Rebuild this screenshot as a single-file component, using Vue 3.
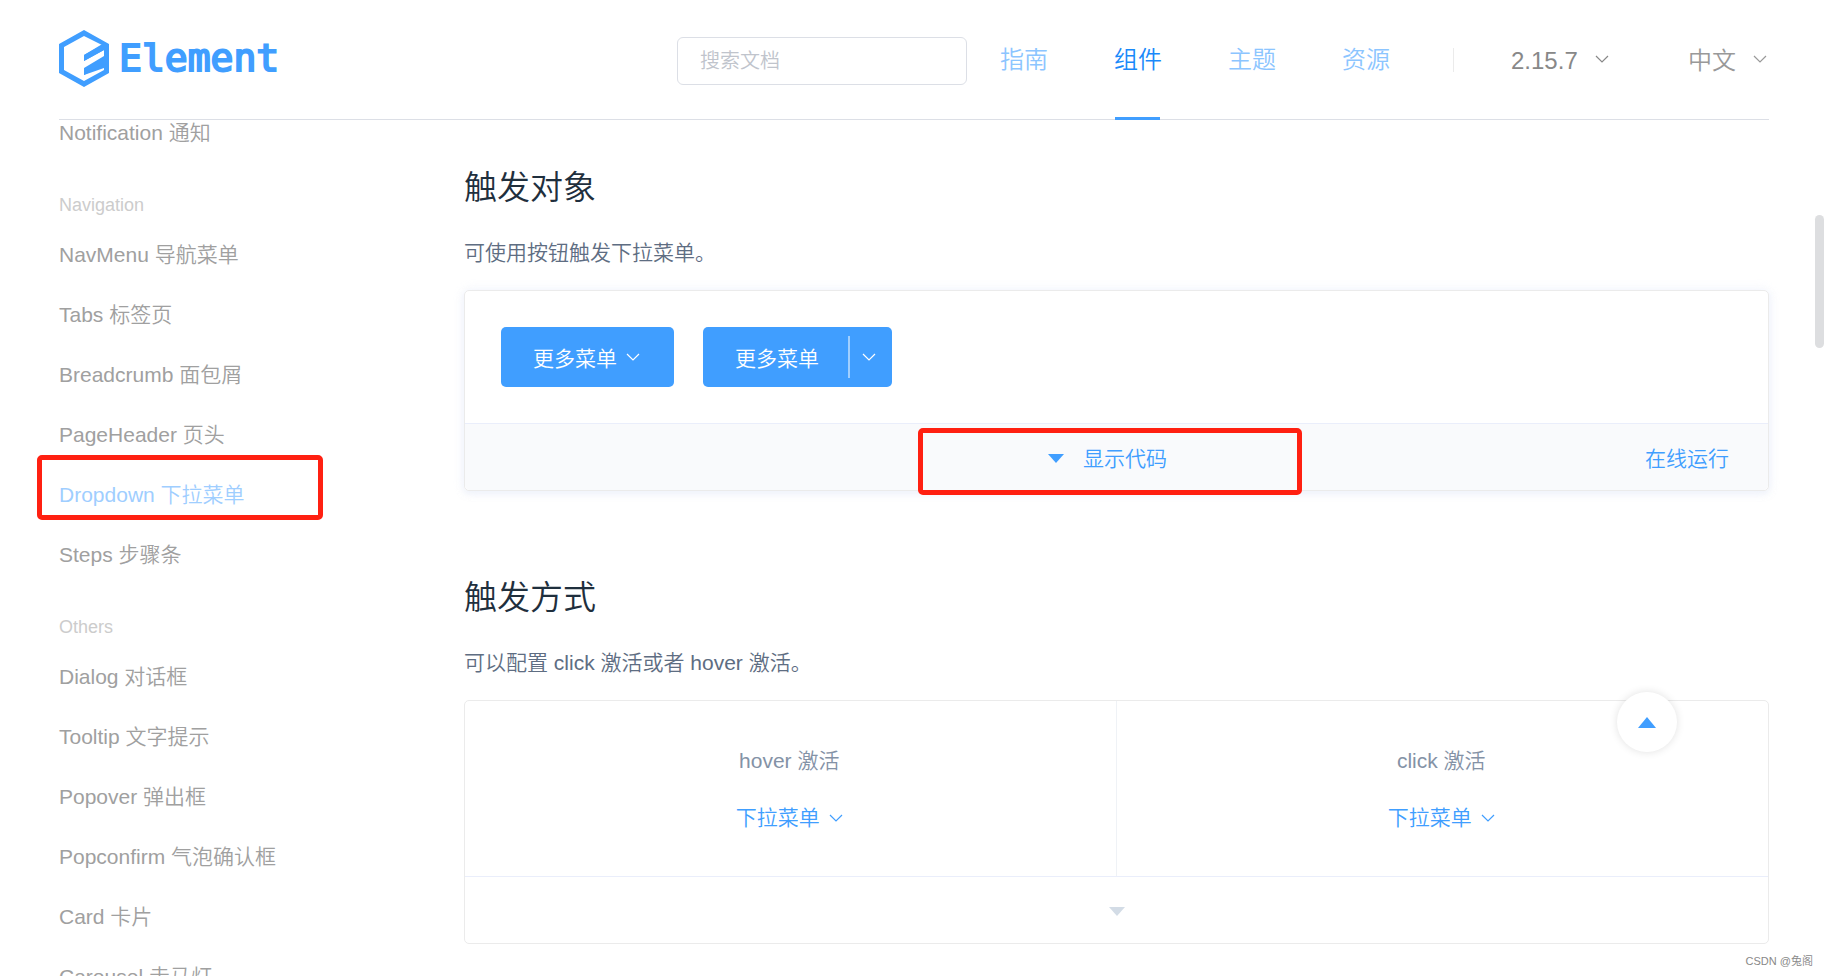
<script setup>
import { ref } from 'vue'

const keyword = ref('')
const navLinks = [
  { text: '指南' },
  { text: '组件', active: true },
  { text: '主题' },
  { text: '资源' }
]

const groups = [
  { title: '', items: ['Notification 通知'] },
  {
    title: 'Navigation',
    items: [
      'NavMenu 导航菜单',
      'Tabs 标签页',
      'Breadcrumb 面包屑',
      'PageHeader 页头',
      'Dropdown 下拉菜单',
      'Steps 步骤条'
    ]
  },
  {
    title: 'Others',
    items: [
      'Dialog 对话框',
      'Tooltip 文字提示',
      'Popover 弹出框',
      'Popconfirm 气泡确认框',
      'Card 卡片',
      'Carousel 走马灯'
    ]
  }
]
const current = 'Dropdown 下拉菜单'
const triggers = ['hover 激活', 'click 激活']
</script>

<template>
  <div class="page">
    <header class="header">
      <div class="header-inner">
        <a class="logo" href="#" aria-label="Element">
          <svg class="logo-mark" viewBox="0 0 50 57" aria-hidden="true">
            <path fill-rule="evenodd" d="M25 0 50 14V43L25 57 0 43V14ZM25 6 5 17V40L25 51 45 40V38L25 45V39L45 27V20L25 31V25L43 15Z" />
            <path d="M25 25 45 13V20L25 31ZM25 38 45 26 50 25V32L25 45Z" />
          </svg>
          <span class="logo-text">Element</span>
        </a>
        <input v-model="keyword" class="search" type="text" placeholder="搜索文档" aria-label="搜索文档" />
        <nav class="nav">
          <a v-for="link in navLinks" :key="link.text" href="#" class="nav-link" :class="{ active: link.active }">{{ link.text }}</a>
        </nav>
        <span class="nav-divider"></span>
        <label class="picker version">
          <select aria-label="版本"><option>2.15.7</option></select>
          <svg class="chevron" viewBox="0 0 14 8" aria-hidden="true"><path d="M1 1 7 7 13 1" /></svg>
        </label>
        <label class="picker language">
          <select aria-label="语言"><option>中文</option></select>
          <svg class="chevron" viewBox="0 0 14 8" aria-hidden="true"><path d="M1 1 7 7 13 1" /></svg>
        </label>
      </div>
    </header>

    <div class="body">
      <aside class="sidebar">
        <section v-for="group in groups" :key="group.title">
          <h4 v-if="group.title" class="group-title">{{ group.title }}</h4>
          <ul>
            <li v-for="item in group.items" :key="item">
              <a href="#" :class="{ current: item === current }">{{ item }}</a>
              <span v-if="item === current" class="mark mark-item"></span>
            </li>
          </ul>
        </section>
      </aside>

      <main class="content">
        <h3>触发对象</h3>
        <p>可使用按钮触发下拉菜单。</p>
        <div class="demo raised">
          <div class="demo-buttons">
            <button type="button" class="btn">
              更多菜单
              <svg class="chevron" viewBox="0 0 14 8" aria-hidden="true"><path d="M1 1 7 7 13 1" /></svg>
            </button>
            <div class="split">
              <button type="button" class="btn split-main">更多菜单</button>
              <button type="button" class="btn split-caret" aria-label="展开菜单">
                <svg class="chevron" viewBox="0 0 14 8" aria-hidden="true"><path d="M1 1 7 7 13 1" /></svg>
              </button>
            </div>
          </div>
          <div class="demo-footer">
            <button type="button" class="toggle">
              <svg class="triangle" viewBox="0 0 16 9" aria-hidden="true"><path d="M0 0H16L8 9Z" /></svg>
              显示代码
            </button>
            <button type="button" class="run">在线运行</button>
            <span class="mark mark-code"></span>
          </div>
        </div>

        <h3>触发方式</h3>
        <p>可以配置 click 激活或者 hover 激活。</p>
        <div class="demo">
          <div class="demo-triggers">
            <div v-for="name in triggers" :key="name" class="trigger">
              <span class="trigger-name">{{ name }}</span>
              <button type="button" class="trigger-link">
                下拉菜单
                <svg class="chevron" viewBox="0 0 14 8" aria-hidden="true"><path d="M1 1 7 7 13 1" /></svg>
              </button>
            </div>
          </div>
          <button type="button" class="expand" aria-label="显示代码">
            <svg class="triangle" viewBox="0 0 16 9" aria-hidden="true"><path d="M0 0H16L8 9Z" /></svg>
          </button>
        </div>
      </main>
    </div>

    <button type="button" class="to-top" aria-label="回到顶部">
      <svg viewBox="0 0 18 11" aria-hidden="true"><path d="M9 0 18 11H0Z" /></svg>
    </button>
    <span class="scroll-thumb"></span>
    <span class="credit">CSDN @兔阁</span>
  </div>
</template>

<style>
body {
  margin: 0;
  background: #fff;
}
</style>

<style scoped>
.page {
  position: relative;
  height: 100vh;
  overflow: hidden;
  background: #fff;
  color: #5e6d82;
  font-family: "Liberation Sans", "Noto Sans CJK SC", sans-serif;
  font-size: 21px;
  font-weight: 350;
}
* {
  box-sizing: border-box;
}
button,
input,
select {
  margin: 0;
  padding: 0;
  border: 0;
  background: none;
  color: inherit;
  font: inherit;
}
button {
  cursor: pointer;
}
a {
  color: inherit;
  text-decoration: none;
}
.chevron {
  flex: none;
  width: 14px;
  height: 8px;
  fill: none;
  stroke: currentColor;
  stroke-width: 1.2;
}
.triangle {
  width: 16px;
  height: 9px;
  margin-top: 3px;
  fill: currentColor;
}

.header {
  position: relative;
  z-index: 1;
  padding: 0 58px 0 59px;
}
.header-inner {
  display: flex;
  align-items: center;
  height: 120px;
  background: #fff;
  box-shadow: inset 0 -1px #dcdfe6;
  font-size: 24px;
}
.logo {
  display: flex;
  align-items: center;
  gap: 10px;
  margin-right: auto;
  padding-bottom: 3px;
  color: #409eff;
}
.logo-mark {
  width: 50px;
  height: 57px;
  fill: currentColor;
}
.logo-text {
  font-family: "DejaVu Sans Mono", monospace;
  font-size: 38px;
  font-weight: 400;
  line-height: 57px;
  -webkit-text-stroke: 2px currentColor;
}
.search {
  width: 290px;
  height: 48px;
  margin: 2px 33px 0 0;
  padding: 0 22px;
  border: 1px solid #dcdfe6;
  border-radius: 6px;
  font-size: 20px;
}
.search::placeholder {
  color: #c0c4cc;
}
.nav {
  display: flex;
  gap: 66px;
}
.nav-link {
  position: relative;
  height: 120px;
  color: #8cc5ff;
  line-height: 120px;
}
.nav-link.active {
  color: #1989fa;
}
.nav-link.active::after {
  content: "";
  position: absolute;
  right: 2px;
  bottom: 0;
  left: 1px;
  height: 3px;
  background: #409eff;
}
.nav-divider {
  width: 1px;
  height: 24px;
  margin: 0 57px 0 63px;
  background: #ebebeb;
}
.picker {
  display: flex;
  align-items: center;
  gap: 17px;
}
.picker select {
  appearance: none;
}
.picker .chevron {
  margin-bottom: 2px;
}
.version {
  margin-right: 79px;
  color: #888;
}
.language {
  margin-right: 2px;
  color: #999;
}

.body {
  display: flex;
  padding: 0 58px 0 59px;
}
.sidebar {
  flex: none;
  width: 405px;
  margin-top: -17px;
  color: #a0a0a0;
}
.sidebar ul {
  margin: 0;
  padding: 0;
  list-style: none;
}
.sidebar li {
  position: relative;
  height: 60px;
  line-height: 60px;
}
.sidebar .current {
  color: #9fceff;
}
.group-title {
  margin: 23px 0 0;
  color: #ccc;
  font-size: 18px;
  font-weight: inherit;
  line-height: 39px;
}
.mark {
  position: absolute;
  border: 5px solid #ff2011;
  border-radius: 5px;
  pointer-events: none;
}
.mark-item {
  top: -10px;
  left: -22px;
  width: 286px;
  height: 65px;
}

.content {
  flex: 1;
  min-width: 0;
  padding-top: 44px;
}
h3 {
  margin: 0;
  color: #1f2f3d;
  font-size: 33px;
  font-weight: inherit;
  line-height: 48px;
}
p {
  margin: 25px 0 21px;
  line-height: 32px;
}
.demo {
  border: 1px solid #ebebeb;
  border-radius: 5px;
}
.raised {
  margin-bottom: 83px;
  box-shadow: 0 0 12px rgba(232, 237, 250, 0.6), 0 3px 6px rgba(232, 237, 250, 0.5);
}
.demo-buttons {
  display: flex;
  gap: 29px;
  padding: 36px;
}
.btn {
  display: flex;
  align-items: center;
  gap: 9px;
  height: 60px;
  padding: 0 34px 0 32px;
  border-radius: 5px;
  background: #409eff;
  color: #fff;
}
.split {
  display: flex;
}
.split-main {
  padding-right: 29px;
  border-radius: 5px 0 0 5px;
}
.split-caret {
  padding: 0 16px 0 0;
  border-radius: 0 5px 5px 0;
  gap: 12px;
}
.split-caret::before {
  content: "";
  width: 2px;
  height: 42px;
  background: rgba(255, 255, 255, 0.5);
}
.demo-footer {
  position: relative;
  display: grid;
  grid-template-columns: 1fr auto 1fr;
  height: 67px;
  border-top: 1px solid #eaeefb;
  border-radius: 0 0 5px 5px;
  background: #f9fafc;
  color: #409eff;
}
.toggle {
  grid-column: 2;
  display: flex;
  align-items: center;
  gap: 19px;
  padding-right: 18px;
}
.run {
  justify-self: end;
  padding: 0 39px;
}
.mark-code {
  top: 4px;
  left: calc(50% - 199px);
  width: 384px;
  height: 67px;
}
.demo-triggers {
  display: grid;
  grid-template-columns: 1fr 1fr;
}
.trigger {
  display: flex;
  flex-direction: column;
  align-items: center;
  gap: 25px;
  padding: 44px 2px 42px 0;
  color: #8492a6;
  line-height: 32px;
}
.trigger:first-child {
  border-right: 1px solid #eff2f6;
}
.trigger-link {
  display: flex;
  align-items: center;
  gap: 9px;
  color: #409eff;
}
.expand {
  display: flex;
  align-items: center;
  justify-content: center;
  width: 100%;
  height: 67px;
  border-top: 1px solid #eaeefb;
  color: #d3dce6;
}

.to-top {
  position: absolute;
  right: 150px;
  bottom: 224px;
  display: flex;
  align-items: center;
  justify-content: center;
  width: 60px;
  height: 60px;
  border-radius: 50%;
  background: #fff;
  box-shadow: 0 0 9px rgba(0, 0, 0, 0.12);
}
.to-top svg {
  width: 18px;
  height: 11px;
  fill: #409eff;
}
.scroll-thumb {
  position: absolute;
  top: 215px;
  right: 3px;
  width: 9px;
  height: 133px;
  border-radius: 5px;
  background: #dddee0;
}
.credit {
  position: absolute;
  right: 14px;
  bottom: 6px;
  color: #888;
  font-size: 11px;
  line-height: 18px;
}
</style>
